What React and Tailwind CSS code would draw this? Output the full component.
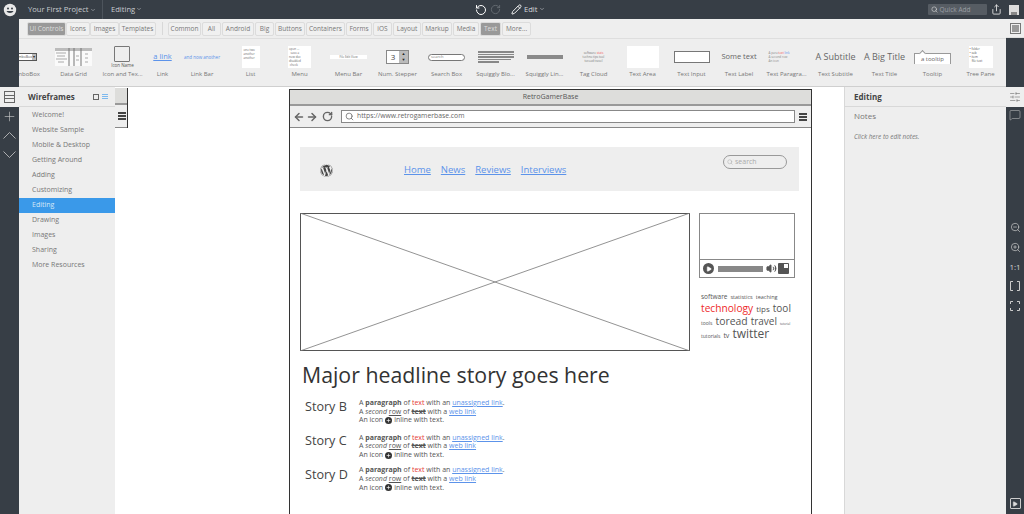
import React from "react";
import { ChevronDown, RotateCcw, RotateCw, Pencil, Search, Share, Plus, ArrowLeft, ArrowRight, Volume2, ZoomIn, ZoomOut, SlidersHorizontal, MessageSquare, Play } from "lucide-react";
import { FaWordpress } from "react-icons/fa";

const groupA = [["UI Controls", 39, true], ["Icons", 24], ["Images", 29], ["Templates", 37]];
const groupB = [["Common", 33], ["All", 19], ["Android", 32], ["Big", 19], ["Buttons", 30], ["Containers", 39], ["Forms", 26], ["iOS", 19], ["Layout", 28], ["Markup", 30], ["Media", 26], ["Text", 21, true], ["More...", 29]];

function Tab({ label, w, on }) {
  return <div style={{ width: w }} className={`h-[14px] shrink-0 flex items-center justify-center rounded-[2px] border border-[#dcdcdc] text-[6.5px] ${on ? "bg-[#999999] text-[#dedede]" : "bg-[#f0f0f0] text-[#777]"}`}>{label}</div>;
}

const Tiny = ({ children, className = "" }) => <span className={`text-[3px] leading-[4px] whitespace-nowrap ${className}`}>{children}</span>;

function Squig({ w = 36 }) {
  return <div className="flex flex-col gap-[1px]" style={{ width: w }}>
    <div className="h-[1.5px] bg-[#888]" /><div className="h-[1.5px] bg-[#888]" /><div className="h-[1.5px] bg-[#888]" /><div className="h-[1.5px] bg-[#888] w-[94%]" /><div className="h-[1.5px] bg-[#888] w-[60%]" />
  </div>;
}

const items = [
  ["ComboBox", 49, <div className="w-[25px] h-[8px] border border-[#555] bg-white flex items-center justify-between text-[3.5px] text-[#555] pl-[1px]">ComboBox<span className="w-[6px] h-full bg-[#bbb] text-center leading-[6px] text-[#222]">▾</span></div>],
  ["Data Grid", 49, <svg width="37" height="18" viewBox="0 0 37 18"><rect width="37" height="18" fill="#fafafa" /><rect width="37" height="3" fill="#bbb" /><path d="M14 0v18M19 0v18M26 0v18" stroke="#777" strokeWidth="1" /><path d="M1 5h10M2 8h8M1 11h11M3 14h6M30 6h3M30 10h3M30 14h3M21 8h3M21 12h3" stroke="#aaa" strokeWidth="1" /></svg>],
  ["Icon and Tex...", 49, <div className="flex flex-col items-center"><div className="w-[16px] h-[16px] border border-[#777] rounded-[1px] bg-[#eee]" /><span className="text-[4.5px] leading-[6px] text-[#555]">Icon Name</span></div>],
  ["Link", 31, <span className="text-[7.5px] text-[#5c93ea] underline">a link</span>],
  ["Link Bar", 48, <span className="text-[4.5px] text-[#5c93ea] whitespace-nowrap">and now another</span>],
  ["List", 49, <div className="w-[18px] h-[22px] bg-white flex flex-col p-[2px] text-[#666]"><Tiny>one two</Tiny><Tiny>another</Tiny><Tiny>another</Tiny></div>],
  ["Menu", 49, <div className="w-[23px] h-[22px] bg-white flex flex-col p-[1px] text-[#666]"><Tiny>open ...</Tiny><Tiny>&nbsp; save a</Tiny><Tiny>new doc</Tiny><Tiny>disabled</Tiny><Tiny>&nbsp;check</Tiny></div>],
  ["Menu Bar", 49, <div className="w-[37px] h-[4px] bg-white text-[#666] flex items-center justify-around"><Tiny>File Edit View</Tiny></div>],
  ["Num. Stepper", 49, <div className="w-[23px] h-[14px] flex border border-[#888] bg-white"><span className="flex-1 text-center text-[8px] leading-[12px] text-[#444]">3</span><span className="w-[9px] bg-[#bbb] text-[4px] leading-[6px] text-center text-[#222]">▲<br />▼</span></div>],
  ["Search Box", 49, <div className="w-[37px] h-[7px] border border-[#777] rounded-full bg-white flex items-center pl-[2px] text-[#777]"><Tiny className="text-[4px]">search</Tiny></div>],
  ["Squiggly Blo...", 49, <Squig />],
  ["Squiggly Lin...", 49, <div className="w-[36px] h-[4px] bg-[#8a8a8a]" />],
  ["Tag Cloud", 49, <div className="w-[34px] flex flex-col items-center text-[#777]"><Tiny>software <span className="text-[#e55]">stats</span></Tiny><Tiny>techno tips tool</Tiny><Tiny>toread travel</Tiny></div>],
  ["Text Area", 49, <div className="w-[32px] h-[22px] bg-white" />],
  ["Text Input", 49, <div className="w-[36px] h-[12px] bg-white border border-[#777]" />],
  ["Text Label", 46, <span className="text-[7.5px] text-[#666] whitespace-nowrap">Some text</span>],
  ["Text Paragra...", 49, <div className="w-[36px] flex flex-col text-[#888]"><Tiny>A para <span className="text-[#e55]">text</span> <span className="text-[#5c93ea]">link</span></Tiny><Tiny>A second row</Tiny><Tiny>An icon</Tiny></div>],
  ["Text Subtitle", 49, <span className="text-[9px] text-[#666] whitespace-nowrap">A Subtitle</span>],
  ["Text Title", 49, <span className="text-[9px] text-[#666] whitespace-nowrap">A Big Title</span>],
  ["Tooltip", 47, <div className="relative w-[37px] h-[11px] bg-white border border-b-0 border-[#999] mt-[3px] flex items-center justify-center text-[6px] text-[#666]"><span className="absolute -top-[3px] left-[5px] w-[5px] h-[5px] bg-white border-l border-t border-[#999] rotate-45" />a tooltip</div>],
  ["Tree Pane", 49, <div className="w-[24px] h-[22px] bg-white flex flex-col p-[1px] text-[#555]"><Tiny>• folder</Tiny><Tiny>• sub</Tiny><Tiny>• item</Tiny><Tiny>&nbsp; &nbsp;file text</Tiny></div>],
];

const pages = ["Welcome!", "Website Sample", "Mobile & Desktop", "Getting Around", "Adding", "Customizing", "Editing", "Drawing", "Images", "Sharing", "More Resources"];

function Smiley() {
  return <svg width="14" height="14" viewBox="0 0 14 14"><circle cx="7" cy="7" r="6.2" fill="#e8e8e8" /><circle cx="5" cy="5.5" r="1" fill="#373e46" /><circle cx="9" cy="5.5" r="1" fill="#373e46" /><path d="M3.5 8c1 2.6 6 2.6 7 0z" fill="#373e46" /></svg>;
}

function Story({ name, mt, labelPt, paraPt }) {
  return <div className={`flex ${mt}`}>
    <div className={`w-[59px] pl-[5px] shrink-0 text-[12.6px] leading-[18px] text-[#444] ${labelPt}`}>{name}</div>
    <div className={`text-[7px] leading-[8.7px] text-[#555] whitespace-nowrap ${paraPt}`}>
      <div>A <b>paragraph</b> of <span className="text-[#e53935]">text</span> with an <span className="text-[#5c93ea] underline">unassigned link</span>.</div>
      <div>A <i>second</i> <span className="underline">row</span> of <span className="line-through font-bold">text</span> with a <span className="text-[#5c93ea] underline">web link</span></div>
      <div className="flex items-center gap-[2px]">An icon <span className="w-[7px] h-[7px] rounded-full bg-[#333] flex items-center justify-center"><Plus size={5} strokeWidth={3} color="#fff" /></span> inline with text.</div>
    </div>
  </div>;
}

const Rail = ({ children }) => <div className="h-[19.5px] flex items-center justify-center">{children}</div>;

export default function App() {
  return (
    <div className="w-[1024px] h-[514px] overflow-hidden flex flex-col bg-[#373e46] font-['Open_Sans',sans-serif]">
      <header className="h-[19px] shrink-0 flex items-center text-[#c8ccd0] text-[7.6px]">
        <div className="w-[19px] h-full flex items-center justify-center"><Smiley /></div>
        <div className="w-[83px] h-full flex items-center pl-[9px] gap-[1px] whitespace-nowrap">Your First Project <ChevronDown size={6} /></div>
        <div className="w-px h-full bg-[#4d545c]" />
        <div className="w-[60px] flex items-center pl-[8px] gap-[1px]">Editing <ChevronDown size={6} /></div>
        <div className="ml-[312px] flex items-center text-white"><RotateCcw size={12} /><RotateCw size={11} className="ml-[3px] text-[#666c73]" /><Pencil size={11} className="ml-[10px]" /><span className="ml-[2px] flex items-center gap-[1px] text-[#d6d9dc]">Edit <ChevronDown size={6} /></span></div>
        <div className="ml-[383px] w-[59px] h-[11px] bg-[#565c63] rounded-[1px] flex items-center pl-[3px] gap-[2px] text-[6.5px] text-[#9a9fa4]"><Search size={7} color="#ddd" />Quick Add</div>
        <Share size={11} className="ml-[4px] text-[#ddd]" />
        <div className="ml-[7px] w-[10px] h-[10px] bg-[#ddd] flex items-end justify-center"><div className="w-[6px] h-[3px] bg-[#888]" /></div>
      </header>
      <div className="flex-1 min-h-0 flex">
        <aside className="w-[19px] shrink-0 flex flex-col items-center">
          <div className="h-[68px] shrink-0" />
          <div className="w-full h-[20px] shrink-0 bg-[#eeeeee] flex items-center justify-center">
            <div className="w-[11px] h-[12px] border border-[#666] flex flex-col justify-evenly"><div className="h-px bg-[#666]" /><div className="h-px bg-[#666]" /></div>
          </div>
          <Plus size={15} strokeWidth={1} className="text-[#ccc] mt-[2px]" />
          <svg width="13" height="7" viewBox="0 0 13 7" className="mt-[8px]" fill="none" stroke="#ccc" strokeWidth=".8"><path d="M.5 6.5L6.5.5l6 6" /></svg>
          <svg width="13" height="7" viewBox="0 0 13 7" className="mt-[12px]" fill="none" stroke="#ccc" strokeWidth=".8"><path d="M.5.5l6 6 6-6" /></svg>
        </aside>
        <div className="flex-1 min-w-0 flex flex-col">
          <section className="h-[68px] shrink-0 bg-[#eeeeee] border-b border-[#cfcfcf] flex flex-col">
            <div className="h-[20px] shrink-0 border-b border-[#dedede] flex items-center pl-[8px]">
              {groupA.map(([l, w, on]) => <Tab key={l} label={l} w={w} on={on} />)}
              <div className="w-px h-[13px] bg-[#d8d8d8] mx-[6px]" />
              <div className="-ml-[1px] flex gap-[1px]">{groupB.map(([l, w, on]) => <Tab key={l} label={l} w={w} on={on} />)}</div>
            </div>
            <div className="flex-1 min-h-0 overflow-hidden">
              <div className="flex -ml-[19px]">
                {items.map(([label, w, pic]) => (
                  <div key={label} style={{ width: w }} className="shrink-0 flex flex-col items-center">
                    <div className="h-[22px] mt-[7px] w-full flex items-center justify-center">{pic}</div>
                    <div className="mt-[2px] text-[6px] leading-[9px] text-[#777] whitespace-nowrap">{label}</div>
                  </div>
                ))}
              </div>
            </div>
          </section>
          <div className="flex-1 min-h-0 flex">
            <nav className="w-[96px] shrink-0 bg-[#eeeeee] flex flex-col">
              <div className="h-[20px] shrink-0 border-b border-[#d8d8d8] flex items-center pl-[9px] text-[8px] font-bold text-[#444]">
                Wireframes
                <div className="ml-[18px] w-[6px] h-[6px] border border-[#666]" />
                <div className="ml-[3px] w-[6px] flex flex-col gap-[1px]"><div className="h-px bg-[#7db9ee]" /><div className="h-px bg-[#7db9ee]" /><div className="h-px bg-[#7db9ee]" /></div>
              </div>
              <div className="pt-[1px]">
                {pages.map((p) => <div key={p} className={`h-[14.95px] pl-[13px] flex items-center text-[7px] ${p === "Editing" ? "bg-[#3a99e9] text-[#d5e8f8]" : "text-[#777]"}`}>{p}</div>)}
              </div>
            </nav>
            <main className="flex-1 min-w-0 bg-white flex overflow-hidden">
              <div className="w-[13px] h-[40px] shrink-0 mt-[1px] bg-[#dddddb] border-r-[1.5px] border-[#333] flex flex-col">
                <div className="h-[17px] border-b-2 border-[#999]" />
                <div className="flex-1 bg-[#eeeeee] border-b border-[#888] flex flex-col items-end justify-center gap-[1px] pr-[1px]"><div className="w-[8px] h-[2px] bg-[#444]" /><div className="w-[8px] h-[2px] bg-[#444]" /><div className="w-[8px] h-[2px] bg-[#444]" /></div>
              </div>
              <article className="ml-[161px] w-[523px] shrink-0 mt-[2px] border-x-[1.5px] border-t-[1.5px] border-[#333] flex flex-col">
                <div className="h-[16px] shrink-0 bg-[#dddddb] border-b-2 border-[#999] flex items-center justify-center text-[7px] text-[#555]">RetroGamerBase</div>
                <div className="h-[22px] shrink-0 bg-[#eeeeee] border-b border-[#888] flex items-center pl-[3px] pr-[4px] text-[#666]">
                  <ArrowLeft size={12} strokeWidth={3} />
                  <ArrowRight size={12} strokeWidth={3} className="ml-[1px]" />
                  <RotateCw size={11} strokeWidth={3} className="ml-[4px]" />
                  <div className="ml-[8px] flex-1 h-[13px] bg-white border border-[#888] flex items-center pl-[3px] gap-[3px] text-[6.8px] text-[#666]"><Search size={9} />https://www.retrogamerbase.com</div>
                  <div className="ml-[4px] w-[8px] flex flex-col gap-[1px]"><div className="h-[2px] bg-[#444]" /><div className="h-[2px] bg-[#444]" /><div className="h-[2px] bg-[#444]" /></div>
                </div>
                <div className="px-[10px] flex flex-col">
                  <div className="mt-[19px] w-[499px] h-[44px] bg-[#eeeeee] flex items-center pl-[20px]">
                    <FaWordpress size={13} className="text-[#444] mt-[2px]" />
                    <div className="ml-[71px] mt-[2px] flex gap-[10px] text-[9.5px] text-[#5c93ea] underline"><span>Home</span><span>News</span><span>Reviews</span><span>Interviews</span></div>
                    <div className="ml-auto mr-[12px] -mt-[14px] w-[64px] h-[14px] rounded-full border border-[#999] flex items-center pl-[3px] gap-[2px] text-[7px] text-[#aaa]"><Search size={6} />search</div>
                  </div>
                  <div className="mt-[22px] flex gap-[9px]">
                    <svg className="shrink-0" width="390" height="138" viewBox="0 0 390 138"><rect x=".5" y=".5" width="389" height="137" fill="#fff" stroke="#555" /><path d="M0 0L390 138M390 0L0 138" stroke="#777" strokeWidth=".8" /></svg>
                    <div className="flex-1">
                      <div className="w-[96px] h-[65px] border border-[#888] flex flex-col">
                        <div className="flex-1 border-b border-[#888]" />
                        <div className="h-[17px] flex items-center pl-[3px] text-[#555]">
                          <div className="w-[11px] h-[11px] rounded-full bg-[#555] flex items-center justify-center"><Play size={6} fill="#fff" color="#fff" /></div>
                          <div className="ml-[4px] w-[45px] h-[6px] bg-[#888]" />
                          <Volume2 size={11} fill="#555" className="ml-[3px]" />
                          <div className="ml-[1px] w-[11px] h-[11px] bg-[#555] rounded-[1px] flex justify-end p-[1px]"><div className="w-[4px] h-[4px] bg-white" /></div>
                        </div>
                      </div>
                      <div className="mt-[16px] ml-[2px] w-[95px] text-[#555] leading-none whitespace-nowrap">
                        <div className="h-[9px] flex items-baseline gap-[3px]"><span className="text-[6.5px]">software</span><span className="text-[5.5px]">statistics</span><span className="text-[5.5px]">teaching</span></div>
                        <div className="h-[13px] flex items-baseline gap-[3px]"><span className="text-[10.2px] text-[#ee2a2a]">technology</span><span className="text-[8px]">tips</span><span className="text-[10px]">tool</span></div>
                        <div className="h-[12px] flex items-baseline gap-[3px]"><span className="text-[5px]">tools</span><span className="text-[10.4px]">toread</span><span className="text-[10px]">travel</span><span className="text-[3px]">tutorial</span></div>
                        <div className="h-[13px] flex items-baseline gap-[3px]"><span className="text-[5px]">tutorials</span><span className="text-[7px]">tv</span><span className="text-[12px]">twitter</span></div>
                      </div>
                    </div>
                  </div>
                  <h1 className="mt-[8px] ml-[2px] text-[21.3px] leading-[32px] text-[#333] whitespace-nowrap">Major headline story goes here</h1>
                  <Story name="Story B" mt="mt-[7px]" labelPt="pt-0" paraPt="pt-[1px]" />
                  <Story name="Story C" mt="mt-[6.5px]" labelPt="pt-0" paraPt="pt-[2px]" />
                  <Story name="Story D" mt="mt-[4.5px]" labelPt="pt-[2px]" paraPt="pt-[2px]" />
                </div>
              </article>
            </main>
            <aside className="w-[162px] shrink-0 bg-[#eeeeee] border-l border-[#d8d8d8] flex flex-col">
              <div className="h-[20px] shrink-0 border-b border-[#d8d8d8] flex items-center pl-[9px] text-[8px] font-bold text-[#444]">Editing</div>
              <div className="pl-[9px] mt-[3px] text-[8px] leading-[11px] text-[#777]">Notes</div>
              <div className="pl-[9px] mt-[11px] text-[6.4px] leading-[9px] italic text-[#777]">Click here to edit notes.</div>
            </aside>
          </div>
        </div>
        <aside className="w-[18px] shrink-0 flex flex-col items-stretch text-[#ccc]">
          <div className="h-[19px] shrink-0 bg-[#eeeeee] border-b border-[#dedede] flex items-center justify-center">
            <div className="w-[11px] h-[11px] border border-[#777] flex items-center justify-center"><div className="w-[7px] h-[7px] bg-[#999]" /></div>
          </div>
          <div className="h-[49px] shrink-0" />
          <div className="h-[20px] shrink-0 bg-[#eeeeee] flex items-center justify-center"><SlidersHorizontal size={12} strokeWidth={1} className="text-[#555]" /></div>
          <div className="flex justify-center mt-[2px]"><MessageSquare size={12} strokeWidth={1} /></div>
          <div className="mt-[97px] flex flex-col">
            <Rail><ZoomOut size={11} strokeWidth={1.5} /></Rail>
            <Rail><ZoomIn size={11} strokeWidth={1.5} /></Rail>
            <Rail><span className="text-[8px] leading-none text-[#d4d4d4]">1:1</span></Rail>
            <Rail><svg width="10" height="10" viewBox="0 0 10 10" fill="none" stroke="#ccc"><path d="M3 .5H.5v9H3M7 .5h2.5v9H7" /></svg></Rail>
            <Rail><svg width="10" height="10" viewBox="0 0 10 10" fill="none" stroke="#ccc"><path d="M3 .5H.5V3M7 .5h2.5V3M3 9.5H.5V7M7 9.5h2.5V7" /></svg></Rail>
          </div>
          <div className="mt-auto mb-[5px] mx-auto w-[11px] h-[11px] border border-[#ccc] rounded-[1px] flex items-center justify-center"><Play size={6} fill="#ddd" /></div>
        </aside>
      </div>
    </div>
  );
}
